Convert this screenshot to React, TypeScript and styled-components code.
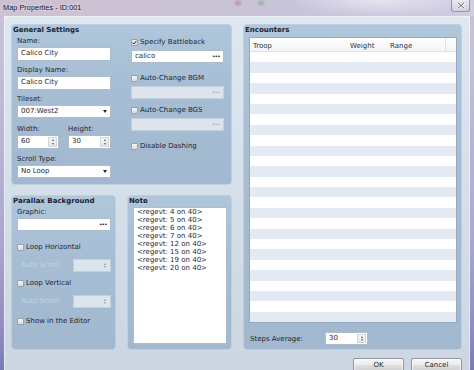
import React from "react";
import styled, { createGlobalStyle } from "styled-components";

const GlobalStyle = createGlobalStyle`
  html, body { margin: 0; padding: 0; }
  body {
    width: 474px; height: 370px; overflow: hidden;
    font-family: "DejaVu Sans", Verdana, sans-serif;
    font-size: 7px; color: #1f2731;
  }
  * { box-sizing: border-box; }
`;

const Window = styled.div`
  width: 474px;
  height: 370px;
  display: flex;
  flex-direction: column;
  background: linear-gradient(to bottom, #cbc1d4 0px, #c6bfd8 60px, #aba7d0 240px, #8c89c0 340px, #7b79b2 370px);
`;

const TitleBar = styled.div`
  height: 17px;
  display: flex;
  align-items: flex-start;
  justify-content: space-between;
  background:
    radial-gradient(ellipse 5px 4px at 238px 3px, rgba(170, 90, 80, 0.45), transparent),
    radial-gradient(ellipse 5px 4px at 261px 3px, rgba(90, 150, 90, 0.45), transparent),
    radial-gradient(ellipse 90px 16px at 380px 0px, rgba(236, 232, 244, 0.85), transparent),
    linear-gradient(to right, #cfc1cf 0px, #cbc2d4 150px, #c8c4da 300px, #d0cde2 474px);
`;

const Title = styled.div`
  padding-left: 3px;
  line-height: 16px;
  font-family: "Liberation Sans", Arial, sans-serif;
  font-size: 7.4px;
  color: #16161e;
  text-shadow: 0 0 3px rgba(255, 255, 255, 0.9);
`;

const CloseButton = styled.div`
  width: 19px;
  height: 12px;
  margin-right: 4px;
  border: 1px solid rgba(90, 86, 120, 0.55);
  border-top: none;
  border-radius: 0 0 3px 3px;
  background: linear-gradient(to bottom, #ece8f1, #d2cde0);
  display: flex;
  align-items: center;
  justify-content: center;
`;

const Frame = styled.div`
  flex: 1;
  display: flex;
  padding: 0 4px 4px 4px;
`;

const Client = styled.div`
  flex: 1;
  display: flex;
  flex-direction: column;
  padding: 8px 8px 5px 7px;
  background: linear-gradient(to bottom, #dfe8f1, #d4dfea 50%, #cbd6e2);
  box-shadow: inset 0 0 0 1px rgba(255, 255, 255, 0.45);
`;

const MainGrid = styled.div`
  flex: 1;
  display: grid;
  grid-template-columns: 221px 219px;
  column-gap: 11px;
`;

const LeftCol = styled.div`
  display: flex;
  flex-direction: column;
  gap: 10px;
`;

const BottomRow = styled.div`
  flex: 1;
  display: grid;
  grid-template-columns: 105px 105px;
  column-gap: 11px;
`;

const Panel = styled.section<{ $h?: number }>`
  ${(p) => (p.$h ? `height: ${p.$h}px;` : "")}
  display: flex;
  flex-direction: column;
  border: 1px solid #bdcfe1;
  border-radius: 4px;
  background: linear-gradient(to bottom, #b0c6db, #a6bdd4 40%, #a1b8cf);
`;

const PanelTitle = styled.div`
  height: 10px;
  line-height: 10px;
  padding-left: 1px;
  font-weight: bold;
  color: #17212c;
  white-space: nowrap;
`;

const GeneralBody = styled.div`
  display: grid;
  grid-template-columns: 94px 93px;
  column-gap: 20px;
  padding: 2px 0 0 5px;
`;

const Stack = styled.div<{ $pad?: string }>`
  display: flex;
  flex-direction: column;
  ${(p) => (p.$pad ? `padding: ${p.$pad};` : "")}
`;

const Field = styled.div<{ $mt?: number }>`
  display: flex;
  flex-direction: column;
  margin-top: ${(p) => p.$mt ?? 0}px;
`;

const Label = styled.div<{ $disabled?: boolean }>`
  height: 9px;
  line-height: 9px;
  margin-bottom: 1px;
  white-space: nowrap;
  color: ${(p) => (p.$disabled ? "#c5d3e1" : "#1f2731")};
`;

const Box = styled.div<{ $h: number; $disabled?: boolean; $w?: number }>`
  height: ${(p) => p.$h}px;
  ${(p) => (p.$w ? `width: ${p.$w}px;` : "")}
  display: flex;
  align-items: center;
  padding: 0 0 0 3px;
  background: ${(p) => (p.$disabled ? "#dce5ee" : "#ffffff")};
  border: 1px solid ${(p) => (p.$disabled ? "#c4d1dd" : "#aebdcc")};
  color: #1f2731;
  white-space: nowrap;
`;

const BoxText = styled.span`
  flex: 1;
  line-height: 9px;
  padding-bottom: 1px;
`;

const Dots = styled.span<{ $disabled?: boolean }>`
  padding-right: 3px;
  font-weight: bold;
  font-size: 4.5px;
  letter-spacing: -0.3px;
  color: ${(p) => (p.$disabled ? "#a4b1be" : "#1f2731")};
`;

const Arrow = styled.span`
  width: 0;
  height: 0;
  margin-right: 3px;
  border-left: 2.5px solid transparent;
  border-right: 2.5px solid transparent;
  border-top: 3px solid #1f2731;
`;

const SpinButtons = styled.div<{ $disabled?: boolean }>`
  width: 9px;
  align-self: stretch;
  margin: 1px 1px 1px 0;
  display: flex;
  flex-direction: column;
  justify-content: space-evenly;
  align-items: center;
  background: ${(p) => (p.$disabled ? "transparent" : "linear-gradient(to bottom, #f6f6f6, #e4e6e9)")};
  border: 1px solid ${(p) => (p.$disabled ? "transparent" : "#d3d8de")};
`;

const TinyUp = styled.span<{ $disabled?: boolean; $down?: boolean }>`
  width: 0;
  height: 0;
  border-left: 1.5px solid transparent;
  border-right: 1.5px solid transparent;
  ${(p) =>
    p.$down
      ? `border-top: 2px solid ${p.$disabled ? "#8d9aa7" : "#555c64"};`
      : `border-bottom: 2px solid ${p.$disabled ? "#8d9aa7" : "#555c64"};`}
`;

const PairGrid = styled.div`
  display: grid;
  grid-template-columns: 42px 43px;
  column-gap: 9px;
`;

const CheckRow = styled.div<{ $mt?: number }>`
  height: 9px;
  margin-top: ${(p) => p.$mt ?? 0}px;
  display: flex;
  align-items: center;
  gap: 2px;
  white-space: nowrap;
  line-height: 9px;
`;

const CheckBox = styled.span`
  width: 7px;
  height: 7px;
  flex: none;
  border: 1px solid #97a2ae;
  border-radius: 1px;
  background: linear-gradient(to bottom, #f3f3f5, #dcdde2);
  display: flex;
  align-items: center;
  justify-content: center;
`;

const Spacer = styled.div<{ $h: number }>`
  height: ${(p) => p.$h}px;
`;

const AutoRow = styled.div<{ $mt: number }>`
  margin-top: ${(p) => p.$mt}px;
  height: 13px;
  display: flex;
  align-items: center;
  justify-content: space-between;
  padding-left: 4px;
`;

const NoteBody = styled.div`
  flex: 1;
  display: flex;
  padding: 1px 4px 5px 5px;
`;

const NoteArea = styled.div`
  flex: 1;
  background: #ffffff;
  border: 1px solid #aebdcc;
  padding: 1px 0 0 3px;
  font-size: 7px;
  line-height: 7.95px;
  white-space: pre;
  color: #1f2731;
`;

const EncBody = styled.div`
  flex: 1;
  display: flex;
  flex-direction: column;
  padding: 2px 4px 4px 5px;
`;

const List = styled.div`
  flex: 1;
  background: #ffffff;
  border: 1px solid #93aac1;
  overflow: hidden;
  display: flex;
  flex-direction: column;
`;

const ListHeader = styled.div`
  height: 14px;
  flex: none;
  display: grid;
  grid-template-columns: 97px 40px 59px 1fr;
  background: linear-gradient(to bottom, #ffffff, #f3f4f6);
  border-bottom: 1px solid #dde3e9;
  color: #2b333c;
`;

const HeaderCell = styled.div<{ $sep?: boolean }>`
  display: flex;
  align-items: center;
  padding: 2px 0 0 3px;
  ${(p) => (p.$sep ? "border-right: 1px solid #dce2e8;" : "")}
`;

const ListRow = styled.div<{ $alt: boolean }>`
  height: 10.4px;
  flex: none;
  background: ${(p) => (p.$alt ? "#e3eaf1" : "#ffffff")};
`;

const StepsRow = styled.div`
  margin-top: 9px;
  height: 13px;
  display: flex;
  align-items: center;
  padding-left: 1px;
`;

const StepsLabel = styled.div`
  width: 75px;
  white-space: nowrap;
`;

const ButtonRow = styled.div`
  margin-top: 8px;
  height: 14px;
  display: flex;
  justify-content: flex-end;
  gap: 7px;
`;

const Button = styled.div`
  width: 51px;
  height: 14px;
  border: 1px solid #8e959d;
  border-radius: 2px;
  background: linear-gradient(to bottom, #f6f6f6 0%, #ececec 48%, #dedede 52%, #d2d2d2 100%);
  display: flex;
  align-items: center;
  justify-content: center;
  color: #1f2731;
  box-shadow: inset 0 0 0 1px rgba(255, 255, 255, 0.6);
`;

const Check = () => (
  <svg width="5" height="5" viewBox="0 0 5 5">
    <path d="M0.6 2.6 L1.9 4 L4.4 0.8" fill="none" stroke="#1d2530" strokeWidth="1" />
  </svg>
);

const CloseGlyph = () => (
  <svg width="8" height="7" viewBox="0 0 8 7">
    <path d="M1 0.8 L7 6.2 M7 0.8 L1 6.2" stroke="#ffffff" strokeWidth="2.4" strokeLinecap="round" />
    <path d="M1 0.8 L7 6.2 M7 0.8 L1 6.2" stroke="#5c5a6e" strokeWidth="1" strokeLinecap="round" />
  </svg>
);

type CbProps = { label: string; checked?: boolean; mt?: number };
const CheckItem = ({ label, checked, mt }: CbProps) => (
  <CheckRow $mt={mt}>
    <CheckBox>{checked ? <Check /> : null}</CheckBox>
    <span>{label}</span>
  </CheckRow>
);

const Spin = ({ value, disabled, h, w }: { value: string; disabled?: boolean; h: number; w?: number }) => (
  <Box $h={h} $w={w} $disabled={disabled}>
    <BoxText>{value}</BoxText>
    <SpinButtons $disabled={disabled}>
      <TinyUp $disabled={disabled} />
      <TinyUp $disabled={disabled} $down />
    </SpinButtons>
  </Box>
);

const notes = [4, 5, 6, 7, 12, 15, 19, 20].map((n) => `<regevt: ${n} on 40>`).join("\n");

export default function App() {
  return (
    <>
      <GlobalStyle />
      <Window>
        <TitleBar>
          <Title>Map Properties - ID:001</Title>
          <CloseButton>
            <CloseGlyph />
          </CloseButton>
        </TitleBar>
        <Frame>
          <Client>
            <MainGrid>
              <LeftCol>
                <Panel $h={161}>
                  <PanelTitle>General Settings</PanelTitle>
                  <GeneralBody>
                    <Stack>
                      <Field>
                        <Label>Name:</Label>
                        <Box $h={14}>
                          <BoxText>Calico City</BoxText>
                        </Box>
                      </Field>
                      <Field $mt={5}>
                        <Label>Display Name:</Label>
                        <Box $h={14}>
                          <BoxText>Calico City</BoxText>
                        </Box>
                      </Field>
                      <Field $mt={5}>
                        <Label>Tileset:</Label>
                        <Box $h={13}>
                          <BoxText>007:West2</BoxText>
                          <Arrow />
                        </Box>
                      </Field>
                      <PairGrid>
                        <Field $mt={7}>
                          <Label>Width:</Label>
                          <Spin value="60" h={14} />
                        </Field>
                        <Field $mt={7}>
                          <Label>Height:</Label>
                          <Spin value="30" h={14} />
                        </Field>
                      </PairGrid>
                      <Field $mt={6}>
                        <Label>Scroll Type:</Label>
                        <Box $h={13}>
                          <BoxText>No Loop</BoxText>
                          <Arrow />
                        </Box>
                      </Field>
                    </Stack>
                    <Stack>
                      <CheckItem label="Specify Battleback" checked mt={1} />
                      <Spacer $h={3} />
                      <Box $h={13}>
                        <BoxText>calico</BoxText>
                        <Dots>•••</Dots>
                      </Box>
                      <CheckItem label="Auto-Change BGM" mt={11} />
                      <Spacer $h={3} />
                      <Box $h={13} $disabled>
                        <BoxText />
                        <Dots $disabled>•••</Dots>
                      </Box>
                      <CheckItem label="Auto-Change BGS" mt={7} />
                      <Spacer $h={3} />
                      <Box $h={13} $disabled>
                        <BoxText />
                        <Dots $disabled>•••</Dots>
                      </Box>
                      <CheckItem label="Disable Dashing" mt={11} />
                    </Stack>
                  </GeneralBody>
                </Panel>
                <BottomRow>
                  <Panel>
                    <PanelTitle>Parallax Background</PanelTitle>
                    <Stack $pad="2px 4px 0 5px">
                      <Field>
                        <Label>Graphic:</Label>
                        <Box $h={13}>
                          <BoxText />
                          <Dots>•••</Dots>
                        </Box>
                      </Field>
                      <CheckItem label="Loop Horizontal" mt={12} />
                      <AutoRow $mt={7}>
                        <Label $disabled>Auto Scroll:</Label>
                        <Spin value="" disabled h={13} w={38} />
                      </AutoRow>
                      <CheckItem label="Loop Vertical" mt={7} />
                      <AutoRow $mt={7}>
                        <Label $disabled>Auto Scroll:</Label>
                        <Spin value="" disabled h={13} w={38} />
                      </AutoRow>
                      <CheckItem label="Show in the Editor" mt={9} />
                    </Stack>
                  </Panel>
                  <Panel>
                    <PanelTitle>Note</PanelTitle>
                    <NoteBody>
                      <NoteArea>{notes}</NoteArea>
                    </NoteBody>
                  </Panel>
                </BottomRow>
              </LeftCol>
              <Panel>
                <PanelTitle>Encounters</PanelTitle>
                <EncBody>
                  <List>
                    <ListHeader>
                      <HeaderCell>Troop</HeaderCell>
                      <HeaderCell>Weight</HeaderCell>
                      <HeaderCell $sep>Range</HeaderCell>
                      <HeaderCell />
                    </ListHeader>
                    {Array.from({ length: 26 }, (_, i) => (
                      <ListRow key={i} $alt={i % 2 === 1} />
                    ))}
                  </List>
                  <StepsRow>
                    <StepsLabel>Steps Average:</StepsLabel>
                    <Spin value="30" h={13} w={43} />
                  </StepsRow>
                </EncBody>
              </Panel>
            </MainGrid>
            <ButtonRow>
              <Button>OK</Button>
              <Button>Cancel</Button>
            </ButtonRow>
          </Client>
        </Frame>
      </Window>
    </>
  );
}
